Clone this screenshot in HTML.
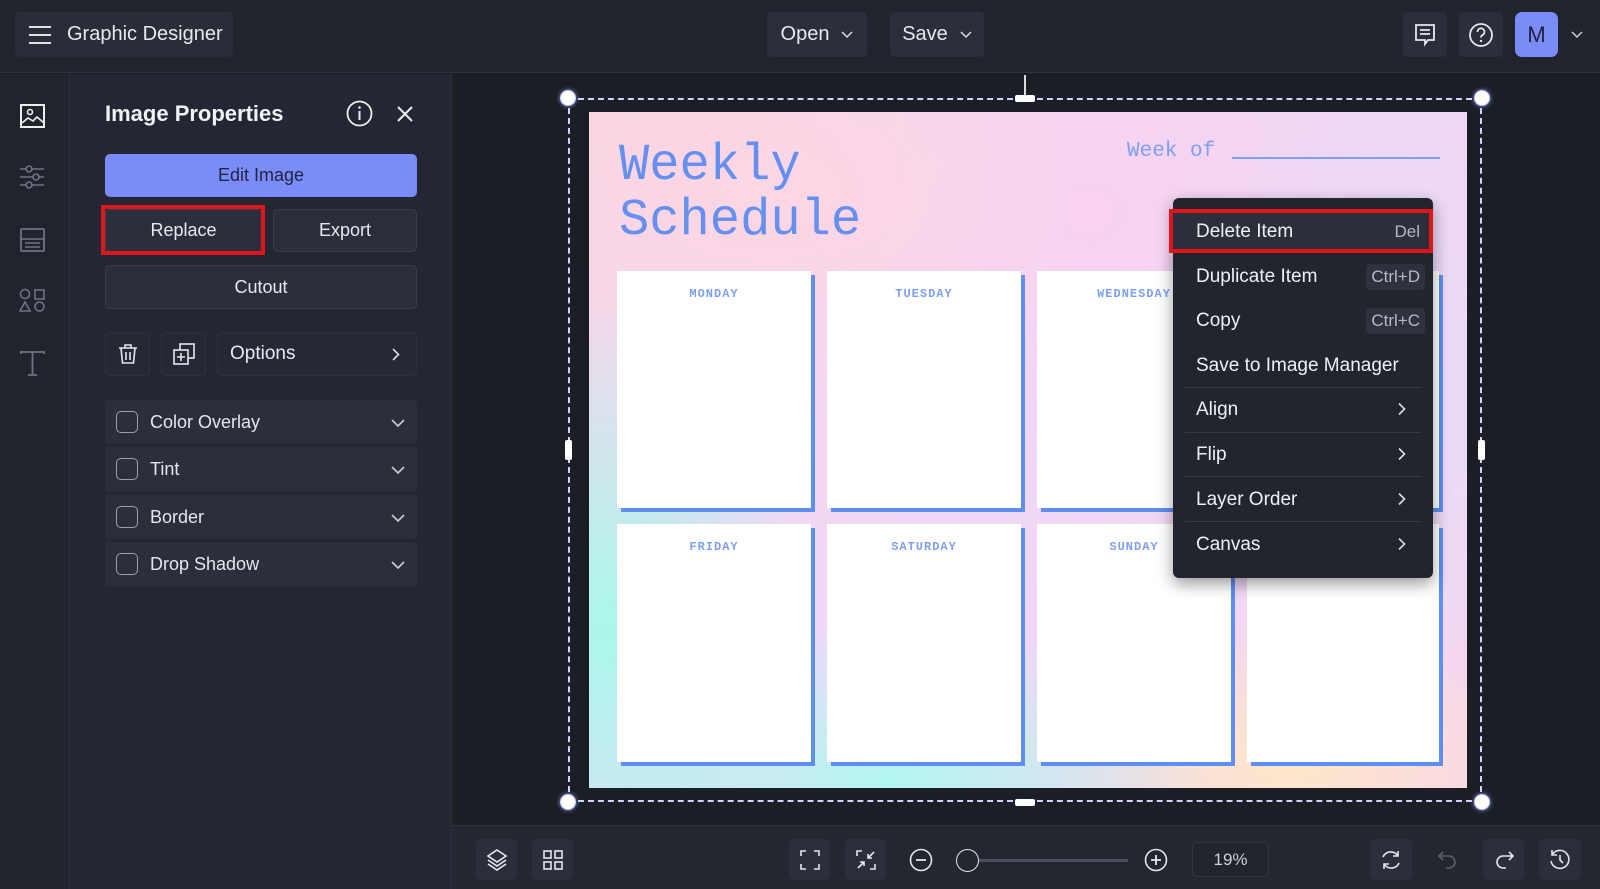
<!DOCTYPE html>
<html><head><meta charset="utf-8"><style>
*{box-sizing:border-box;margin:0;padding:0}
body{width:1600px;height:889px;overflow:hidden;background:#1c1e26;font-family:"Liberation Sans",sans-serif;color:#e6e7ec;position:relative}
.a{position:absolute}
.btn{position:absolute;background:#2c2f3b;border-radius:5px;display:flex;align-items:center;justify-content:center;font-size:18px;color:#e8e9ee}
.top{left:0;top:0;width:1600px;height:73px;background:#21232d;border-bottom:1px solid #2f323d}
.rail{left:0;top:74px;width:70px;height:815px;background:#21232d;border-right:1px solid #2c2f3a}
.panel{left:70px;top:74px;width:382px;height:815px;background:#242733;border-right:1px solid #2f323d}
.bb{left:452px;top:825px;width:1148px;height:64px;background:#242630;border-top:1px solid #2f323d}
.row{position:absolute;left:105px;width:312px;height:44px;background:#2c2f3b;border-radius:3px;font-size:18px;display:flex;align-items:center}
.row .cb{width:22px;height:22px;border:1.5px solid #9da0ab;border-radius:5px;margin:0 12px 0 11px}
.row .ch{position:absolute;right:12px;top:18px}
.card{position:absolute;background:#fff;box-shadow:4px 4px 0 #5e8ef0;font-family:"Liberation Mono",monospace;font-size:12px;color:#7d9ff0;text-align:center;padding-top:16px;letter-spacing:1px;font-weight:bold}
.mi{position:absolute;left:1196px;font-size:19px;color:#eef0f4;transform:translateY(-50%)}
.kb{position:absolute;right:175px;background:#2f323d;border-radius:4px;padding:3px 5px;font-size:17px;color:#b7bac4;transform:translateY(-50%)}
.sep{position:absolute;left:1185px;width:236px;height:1px;background:#353845}
.arr{position:absolute;left:1398px;transform:translateY(-50%)}
.h{position:absolute;width:16px;height:16px;border-radius:50%;background:#fff;border:1px solid #c7cbff;box-shadow:0 0 4px #8fa0ff}
</style></head><body>
<div class="a top"></div>
<div class="btn" style="left:15px;top:12px;width:218px;height:45px;justify-content:flex-start;background:#2a2c37">
<svg style="margin-left:13px" width="24" height="20" viewBox="0 0 24 20"><path d="M1 2h22M1 10h22M1 18h22" stroke="#e0e1e7" stroke-width="2"/></svg>
<span style="margin-left:15px;font-size:20px">Graphic Designer</span></div>
<div class="btn" style="left:767px;top:12px;width:100px;height:45px;font-size:20px">Open<svg style="margin-left:12px" width="12" height="8"><path d="M1 1l5 5 5-5" stroke="#ddd" fill="none" stroke-width="1.5"/></svg></div>
<div class="btn" style="left:890px;top:12px;width:94px;height:45px;font-size:20px">Save<svg style="margin-left:12px" width="12" height="8"><path d="M1 1l5 5 5-5" stroke="#ddd" fill="none" stroke-width="1.5"/></svg></div>
<div class="btn" style="left:1403px;top:12px;width:44px;height:45px"><svg width="22" height="24" viewBox="0 0 22 24"><path d="M2 2h18v15h-6l-3 4v-4H2z" stroke="#e6e7ec" stroke-width="1.8" fill="none"/><path d="M6 7h10M6 11h10" stroke="#e6e7ec" stroke-width="1.8"/></svg></div>
<div class="btn" style="left:1459px;top:12px;width:44px;height:45px"><svg width="26" height="26" viewBox="0 0 26 26"><circle cx="13" cy="13" r="11" stroke="#e6e7ec" stroke-width="1.8" fill="none"/><path d="M9.5 10a3.5 3.5 0 1 1 5 3c-1 .6-1.5 1.2-1.5 2.5" stroke="#e6e7ec" stroke-width="1.8" fill="none"/><circle cx="13" cy="19" r="1.2" fill="#e6e7ec"/></svg></div>
<div class="btn" style="left:1515px;top:12px;width:43px;height:45px;background:#7b8cf8;color:#1d2138;font-size:22px;border-radius:7px">M</div>
<svg class="a" style="left:1571px;top:31px" width="12" height="8"><path d="M1 1l5 5 5-5" stroke="#ccc" fill="none" stroke-width="1.5"/></svg>

<div class="a rail"></div>
<svg class="a" style="left:20px;top:104px" width="25" height="24" viewBox="0 0 25 24"><rect x="1" y="1" width="23" height="22" stroke="#eee" stroke-width="2" fill="none"/><circle cx="10" cy="8" r="2.5" stroke="#eee" stroke-width="1.6" fill="none"/><path d="M2 19l6-5 5 3 4-4 7 6" stroke="#eee" stroke-width="1.6" fill="none"/></svg>
<svg class="a" style="left:19px;top:165px" width="26" height="24" viewBox="0 0 26 24"><path d="M1 4h24M1 12h24M1 20h24" stroke="#6f7382" stroke-width="1.6"/><circle cx="10" cy="4" r="3" fill="#21232d" stroke="#6f7382" stroke-width="1.6"/><circle cx="17" cy="12" r="3" fill="#21232d" stroke="#6f7382" stroke-width="1.6"/><circle cx="10" cy="20" r="3" fill="#21232d" stroke="#6f7382" stroke-width="1.6"/></svg>
<svg class="a" style="left:20px;top:228px" width="25" height="24" viewBox="0 0 25 24"><rect x="1" y="1" width="23" height="22" rx="1" stroke="#6f7382" stroke-width="1.8" fill="none"/><path d="M1 11h23M5 15h15M5 19h15" stroke="#6f7382" stroke-width="1.6"/></svg>
<svg class="a" style="left:19px;top:288px" width="27" height="25" viewBox="0 0 27 25"><circle cx="6" cy="6" r="4.5" stroke="#6f7382" stroke-width="1.6" fill="none"/><rect x="16" y="2" width="9" height="9" stroke="#6f7382" stroke-width="1.6" fill="none"/><path d="M6 14l5 9H1z" stroke="#6f7382" stroke-width="1.6" fill="none"/><circle cx="20.5" cy="18.5" r="4.5" stroke="#6f7382" stroke-width="1.6" fill="none"/></svg>
<svg class="a" style="left:20px;top:350px" width="25" height="26" viewBox="0 0 25 26"><path d="M1 4V2h23v2M12.5 2v23M8 25h9" stroke="#6f7382" stroke-width="1.8" fill="none"/></svg>

<div class="a panel"></div>
<div class="a" style="left:105px;top:101px;font-size:22px;font-weight:bold;color:#f2f3f6">Image Properties</div>
<svg class="a" style="left:346px;top:100px" width="27" height="27" viewBox="0 0 27 27"><circle cx="13.5" cy="13.5" r="12" stroke="#eee" stroke-width="1.8" fill="none"/><path d="M13.5 11v9" stroke="#eee" stroke-width="2"/><circle cx="13.5" cy="7.5" r="1.3" fill="#eee"/></svg>
<svg class="a" style="left:396px;top:105px" width="18" height="18"><path d="M2 2l14 14M16 2L2 16" stroke="#eee" stroke-width="2"/></svg>
<div class="btn" style="left:105px;top:154px;width:312px;height:43px;background:#7b8cf8;color:#1f2442;font-size:18px">Edit Image</div>
<div class="btn" style="left:105px;top:209px;width:157px;height:43px;border:1px solid #3b3e4a">Replace</div>
<div class="a" style="left:101px;top:205px;width:164px;height:50px;border:4px solid #e0141a"></div>
<div class="btn" style="left:273px;top:209px;width:144px;height:43px;border:1px solid #3b3e4a">Export</div>
<div class="btn" style="left:105px;top:265px;width:312px;height:44px;border:1px solid #3b3e4a">Cutout</div>
<div class="btn" style="left:105px;top:332px;width:45px;height:44px;border:1px solid #2f323c;background:#262935"><svg width="20" height="22" viewBox="0 0 20 22"><path d="M1 5h18M7 5V2h6v3M3 5l1.5 15h11L17 5M8 9v8M12 9v8" stroke="#e6e7ec" stroke-width="1.6" fill="none"/></svg></div>
<div class="btn" style="left:161px;top:332px;width:45px;height:44px;border:1px solid #2f323c;background:#262935"><svg width="22" height="22" viewBox="0 0 22 22"><rect x="7" y="1" width="14" height="14" stroke="#e6e7ec" stroke-width="1.6" fill="none"/><rect x="1" y="7" width="14" height="14" fill="#262935" stroke="#e6e7ec" stroke-width="1.6"/><path d="M8 10v8M4 14h8" stroke="#e6e7ec" stroke-width="1.6"/></svg></div>
<div class="btn" style="left:217px;top:332px;width:200px;height:44px;border:1px solid #2f323c;background:#262935;justify-content:flex-start;font-size:19px"><span style="margin-left:12px">Options</span><svg style="position:absolute;right:16px" width="8" height="13"><path d="M1 1l5.5 5.5L1 12" stroke="#ddd" fill="none" stroke-width="1.6"/></svg></div>
<div class="row" style="top:400px"><div class="cb"></div>Color Overlay<svg class="ch" width="14" height="10"><path d="M1 2l6 6 6-6" stroke="#ccc" fill="none" stroke-width="1.6"/></svg></div>
<div class="row" style="top:447px"><div class="cb"></div>Tint<svg class="ch" width="14" height="10"><path d="M1 2l6 6 6-6" stroke="#ccc" fill="none" stroke-width="1.6"/></svg></div>
<div class="row" style="top:495px"><div class="cb"></div>Border<svg class="ch" width="14" height="10"><path d="M1 2l6 6 6-6" stroke="#ccc" fill="none" stroke-width="1.6"/></svg></div>
<div class="row" style="top:542px"><div class="cb"></div>Drop Shadow<svg class="ch" width="14" height="10"><path d="M1 2l6 6 6-6" stroke="#ccc" fill="none" stroke-width="1.6"/></svg></div>

<!-- canvas -->
<div class="a" style="left:589px;top:112px;width:878px;height:676px;background:
radial-gradient(ellipse 200px 340px at 20px 520px,#a9f7ec,transparent),
radial-gradient(ellipse 320px 160px at 300px 670px,#b2f6f0,transparent),
radial-gradient(ellipse 240px 140px at 700px 650px,#ffe7c8,transparent),
radial-gradient(ellipse 300px 200px at 200px 80px,#fcd6e3,transparent),
radial-gradient(ellipse 300px 240px at 500px 100px,#f8d2f0,transparent),
radial-gradient(ellipse 300px 300px at 780px 300px,#e6dcfa,transparent),
linear-gradient(135deg,#f9d6e4,#efd7f6 50%,#f7d5ea)"></div>
<div class="a" style="left:619px;top:138px;font-family:'Liberation Mono',monospace;font-size:52px;line-height:55px;color:#6690f0;transform:scaleX(0.97);transform-origin:left">Weekly<br>Schedule</div>
<div class="a" style="left:1127px;top:140px;font-family:'Liberation Mono',monospace;font-size:21px;color:#7d9ff0">Week of</div>
<div class="a" style="left:1232px;top:157px;width:208px;height:2px;background:#7d9ff0"></div>
<div class="card" style="left:617px;top:271px;width:194px;height:237px">MONDAY</div>
<div class="card" style="left:827px;top:271px;width:194px;height:237px">TUESDAY</div>
<div class="card" style="left:1037px;top:271px;width:194px;height:237px">WEDNESDAY</div>
<div class="card" style="left:1247px;top:271px;width:192px;height:237px"></div>
<div class="card" style="left:617px;top:524px;width:194px;height:238px">FRIDAY</div>
<div class="card" style="left:827px;top:524px;width:194px;height:238px">SATURDAY</div>
<div class="card" style="left:1037px;top:524px;width:194px;height:238px">SUNDAY</div>
<div class="card" style="left:1247px;top:524px;width:192px;height:238px"></div>

<div class="a" style="left:568px;top:98px;width:914px;height:704px;border:2px dashed #cfd4ff"></div>
<div class="a" style="left:1024px;top:75px;width:2px;height:22px;background:#ddd"></div>
<div class="h" style="left:560px;top:90px"></div><div class="h" style="left:1474px;top:90px"></div>
<div class="h" style="left:560px;top:794px"></div><div class="h" style="left:1474px;top:794px"></div>
<div class="a" style="left:1015px;top:95px;width:20px;height:7px;background:#fff;border-radius:2px"></div>
<div class="a" style="left:1015px;top:799px;width:20px;height:7px;background:#fff;border-radius:2px"></div>
<div class="a" style="left:565px;top:440px;width:7px;height:20px;background:#fff;border-radius:2px"></div>
<div class="a" style="left:1478px;top:440px;width:7px;height:20px;background:#fff;border-radius:2px"></div>

<!-- context menu -->
<div class="a" style="left:1173px;top:198px;width:260px;height:380px;background:#23252e;border-radius:6px;box-shadow:0 6px 16px rgba(0,0,0,.4)"></div>
<div class="a" style="left:1173px;top:212px;width:258px;height:38px;background:#2c2f3a"></div>
<div class="a" style="left:1169px;top:209px;width:264px;height:44px;border:4px solid #e0141a"></div>
<div class="mi" style="top:232px">Delete Item</div><div class="kb" style="top:232px;background:#2d303b">Del</div>
<div class="mi" style="top:277px">Duplicate Item</div><div class="kb" style="top:277px">Ctrl+D</div>
<div class="mi" style="top:321px">Copy</div><div class="kb" style="top:321px">Ctrl+C</div>
<div class="mi" style="top:366px">Save to Image Manager</div>
<div class="sep" style="top:387px"></div>
<div class="mi" style="top:410px">Align</div><svg class="arr" style="top:409px" width="8" height="13"><path d="M1 1l5.5 5.5L1 12" stroke="#ddd" fill="none" stroke-width="1.6"/></svg>
<div class="sep" style="top:432px"></div>
<div class="mi" style="top:455px">Flip</div><svg class="arr" style="top:454px" width="8" height="13"><path d="M1 1l5.5 5.5L1 12" stroke="#ddd" fill="none" stroke-width="1.6"/></svg>
<div class="sep" style="top:476px"></div>
<div class="mi" style="top:500px">Layer Order</div><svg class="arr" style="top:499px" width="8" height="13"><path d="M1 1l5.5 5.5L1 12" stroke="#ddd" fill="none" stroke-width="1.6"/></svg>
<div class="sep" style="top:521px"></div>
<div class="mi" style="top:545px">Canvas</div><svg class="arr" style="top:544px" width="8" height="13"><path d="M1 1l5.5 5.5L1 12" stroke="#ddd" fill="none" stroke-width="1.6"/></svg>

<!-- bottom bar -->
<div class="a bb"></div>
<div class="btn" style="left:476px;top:839px;width:41px;height:41px"><svg width="22" height="24" viewBox="0 0 22 24"><path d="M11 2l9 6-9 6-9-6z M2 12l9 6 9-6M2 16l9 6 9-6" stroke="#e6e7ec" stroke-width="1.6" fill="none"/></svg></div>
<div class="btn" style="left:532px;top:839px;width:41px;height:41px"><svg width="20" height="20"><rect x="1" y="1" width="7" height="7" stroke="#e6e7ec" stroke-width="1.6" fill="none"/><rect x="12" y="1" width="7" height="7" stroke="#e6e7ec" stroke-width="1.6" fill="none"/><rect x="1" y="12" width="7" height="7" stroke="#e6e7ec" stroke-width="1.6" fill="none"/><rect x="12" y="12" width="7" height="7" stroke="#e6e7ec" stroke-width="1.6" fill="none"/></svg></div>
<div class="btn" style="left:789px;top:839px;width:41px;height:41px"><svg width="20" height="20"><path d="M1 6V1h5M14 1h5v5M19 14v5h-5M6 19H1v-5" stroke="#e6e7ec" stroke-width="1.6" fill="none"/></svg></div>
<div class="btn" style="left:845px;top:839px;width:41px;height:41px"><svg width="20" height="20"><path d="M1 6V1h5M19 14v5h-5M18 2l-6 6M12 4v4h4M2 18l6-6M4 12h4v4" stroke="#e6e7ec" stroke-width="1.6" fill="none"/></svg></div>
<svg class="a" style="left:909px;top:848px" width="24" height="24"><circle cx="12" cy="12" r="10.5" stroke="#e6e7ec" stroke-width="1.6" fill="none"/><path d="M7 12h10" stroke="#e6e7ec" stroke-width="1.8"/></svg>
<div class="a" style="left:965px;top:859px;width:163px;height:3px;background:#4d505c"></div>
<div class="a" style="left:956px;top:849px;width:23px;height:23px;border-radius:50%;border:1.8px solid #e6e7ec;background:#242630"></div>
<svg class="a" style="left:1144px;top:848px" width="24" height="24"><circle cx="12" cy="12" r="10.5" stroke="#e6e7ec" stroke-width="1.6" fill="none"/><path d="M7 12h10M12 7v10" stroke="#e6e7ec" stroke-width="1.8"/></svg>
<div class="btn" style="left:1192px;top:842px;width:77px;height:35px;background:#22242d;border:1px solid #33363f;font-size:17px;color:#cfd1d8">19%</div>
<div class="btn" style="left:1370px;top:839px;width:42px;height:41px"><svg width="24" height="24" viewBox="0 0 24 24"><path d="M19 8A8.5 8.5 0 0 0 4 9M5 16a8.5 8.5 0 0 0 15-1M19 3v5h-5M5 21v-5h5" stroke="#e6e7ec" stroke-width="1.6" fill="none"/></svg></div>
<svg class="a" style="left:1437px;top:850px" width="22" height="20"><path d="M6 2L2 6l4 4M2 6h10a6 6 0 0 1 0 12H9" stroke="#5c5f6b" stroke-width="1.6" fill="none"/></svg>
<div class="btn" style="left:1483px;top:839px;width:41px;height:41px"><svg width="22" height="20"><path d="M16 2l4 4-4 4M20 6H10a6 6 0 0 0 0 12h3" stroke="#e6e7ec" stroke-width="1.6" fill="none"/></svg></div>
<div class="btn" style="left:1539px;top:839px;width:42px;height:41px"><svg width="24" height="24" viewBox="0 0 24 24"><path d="M4 7a9 9 0 1 1-1 6M4 2v5h5M12 7v5l3 3" stroke="#e6e7ec" stroke-width="1.6" fill="none"/></svg></div>
</body></html>
